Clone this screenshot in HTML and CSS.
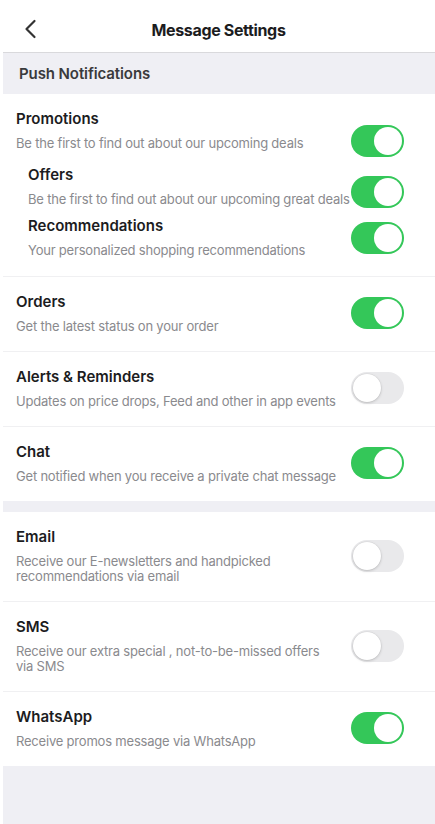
FILE: index.html
```html
<!DOCTYPE html>
<html lang="en">
<head>
  <meta charset="UTF-8" />
  <meta name="viewport" content="width=device-width, initial-scale=1.0"/>
  <title>Message Settings</title>
  <link rel="stylesheet" href="styles.css">
</head>
<body>

  <!-- top bar -->
  <header class="topbar">
    <button class="back" aria-label="Back">
      <svg width="14" height="20" viewBox="0 0 14 20">
        <path d="M11.5 2 L3.5 10 L11.5 18" fill="none" stroke="#333" stroke-width="2.2" stroke-linecap="round" stroke-linejoin="round"/>
      </svg>
    </button>
    <h1>Message Settings</h1>
  </header>

  <div class="page">
    <div class="section-title">Push Notifications</div>

    <!-- promotions + sub options -->
    <div class="group">
      <div class="item item-promo">
        <div class="text">
          <div class="name">Promotions</div>
          <div class="desc">Be the first to find out about our upcoming deals</div>
        </div>
        <span class="toggle on"></span>
      </div>
      <div class="item item-child item-offers">
        <div class="text">
          <div class="name">Offers</div>
          <div class="desc nowrap">Be the first to find out about our upcoming great deals</div>
        </div>
        <span class="toggle on"></span>
      </div>
      <div class="item item-child item-recs">
        <div class="text">
          <div class="name">Recommendations</div>
          <div class="desc">Your personalized shopping recommendations</div>
        </div>
        <span class="toggle on"></span>
      </div>
    </div>

    <div class="row">
      <div class="text">
        <div class="name">Orders</div>
        <div class="desc">Get the latest status on your order</div>
      </div>
      <span class="toggle on"></span>
    </div>

    <div class="row">
      <div class="text">
        <div class="name">Alerts &amp; Reminders</div>
        <div class="desc">Updates on price drops, Feed and other in app events</div>
      </div>
      <span class="toggle"></span>
    </div>

    <div class="row last">
      <div class="text">
        <div class="name">Chat</div>
        <div class="desc">Get notified when you receive a private chat message</div>
      </div>
      <span class="toggle on"></span>
    </div>

    <div class="spacer"></div>

    <div class="row">
      <div class="text">
        <div class="name">Email</div>
        <div class="desc">Receive our E-newsletters and handpicked recommendations via email</div>
      </div>
      <span class="toggle"></span>
    </div>

    <div class="row">
      <div class="text">
        <div class="name">SMS</div>
        <div class="desc">Receive our extra special , not-to-be-missed offers via&nbsp;SMS</div>
      </div>
      <span class="toggle"></span>
    </div>

    <div class="row last">
      <div class="text">
        <div class="name">WhatsApp</div>
        <div class="desc">Receive promos message via WhatsApp</div>
      </div>
      <span class="toggle on"></span>
    </div>

    <div class="footer-space"></div>
  </div>

</body>
</html>
```

FILE: styles.css
```css
:root {
  --green: #34c759;
  --track-off: #e9e9eb;
  --bg-gray: #efeff4;
  --line: #f0f0f2;
  --text: #1c1c1e;
  --muted: #8a8a8e;
}

body {
  font-family: 'Inter', 'Roboto', sans-serif;
  margin: 0;
  background: #fff;
  color: var(--text);
}

.topbar {
  height: 53px;
  box-sizing: border-box;
  padding-top: 8px;
  display: flex;
  align-items: center;
  justify-content: center;
  position: relative;
  border-bottom: 1px solid #d9d9dc;
  margin-left: 3px;
}

.topbar h1 {
  margin: 0 0 0 -1px;
  font-size: 16px;
  font-weight: 700;
  letter-spacing: -0.35px;
}

/* back chevron sits over the left side of the bar */
.back {
  position: absolute;
  left: 20px;
  top: 19px;
  padding: 0;
  border: none;
  background: none;
  cursor: pointer;
}

.page {
  margin-left: 3px;
}

.section-title {
  background: var(--bg-gray);
  height: 41px;
  padding-left: 16px;
  display: flex;
  align-items: center;
  font-size: 15px;
  font-weight: 600;
  letter-spacing: -0.1px;
  color: #3a3a3c;
}

.text {
  flex: 1;
  min-width: 0;
}

.name {
  font-size: 15px;
  font-weight: 600;
  line-height: 20px;
}

.desc {
  font-size: 13px;
  line-height: 15px;
  letter-spacing: -0.2px;
  color: var(--muted);
  margin-top: 7px;
  padding-right: 10px;
}

.desc.nowrap {
  white-space: nowrap;
  padding-right: 0;
}

/* grouped promotions block */
.group {
  padding: 15px 31px 18px 13px;
  border-bottom: 1px solid var(--line);
}

.item {
  display: flex;
  align-items: flex-start;
}

.item-child {
  padding-left: 12px;
}

.item-promo .toggle { margin: 16px 0 -6px; }
.item-offers { margin-top: 14px; }
.item-offers .toggle { margin: 11px 0 -1px; }
.item-recs { margin-top: 9px; }
.item-recs .toggle { margin-top: 6px; }

.row {
  display: flex;
  align-items: center;
  padding: 15px 31px 17px 13px;
  border-bottom: 1px solid var(--line);
}

.row.last {
  border-bottom: none;
}

.spacer {
  height: 11px;
  background: var(--bg-gray);
}

.footer-space {
  height: 60px;
  background: var(--bg-gray);
}

/* iOS style switch */
.toggle {
  flex-shrink: 0;
  width: 53px;
  height: 32px;
  border-radius: 16px;
  background: var(--track-off);
  position: relative;
}

.toggle::after {
  content: "";
  position: absolute;
  top: 2px;
  left: 2px;
  width: 28px;
  height: 28px;
  border-radius: 50%;
  background: #fff;
  box-shadow: 0 1px 3px rgba(0, 0, 0, 0.18), 0 0 0 0.5px rgba(0, 0, 0, 0.06);
}

.toggle.on {
  background: var(--green);
}

.toggle.on::after {
  left: 23px;
  box-shadow: none;
}
```
